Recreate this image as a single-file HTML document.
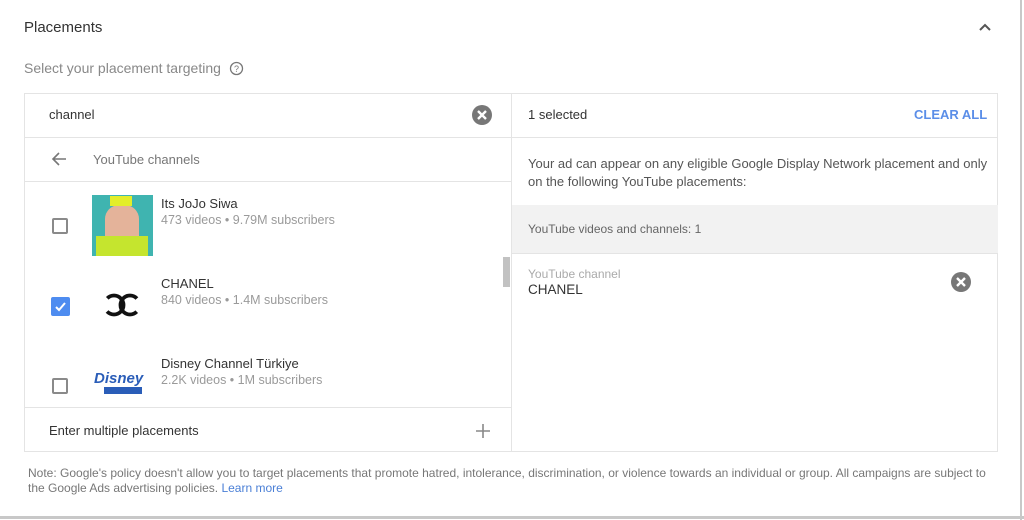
<!DOCTYPE html>
<html><head><style>
body{margin:0;width:1024px;height:520px;background:#fff;font-family:"Liberation Sans",Arial,sans-serif;position:relative;overflow:hidden;color:#333}
.a{position:absolute;white-space:nowrap}
.box{position:absolute;left:24px;top:93px;width:974px;height:359px;border:1px solid #e4e4e4;box-sizing:border-box}
.hl{position:absolute;height:1px;background:#e4e4e4}
.cb{position:absolute;width:16px;height:16px;border:2px solid #8a8a8a;border-radius:2px;box-sizing:border-box}
.t{font-size:13px;color:#333}
.s{font-size:12.5px;color:#9a9a9a}
</style></head><body>
<div style="position:absolute;right:2px;top:0;width:2px;height:520px;background:#c8c8c8"></div>
<div style="position:absolute;left:0;bottom:1px;width:1024px;height:3px;background:#c8c8c8"></div>
<div class="a" style="left:24px;top:19px;font-size:15px;color:#333">Placements</div>
<svg class="a" style="left:978px;top:22px" width="14" height="10"><path d="M2 8 L7 3 L12 8" stroke="#555" stroke-width="2" fill="none"/></svg>
<div class="a" style="left:24px;top:60px;font-size:14px;color:#888">Select your placement targeting</div>
<svg class="a" style="left:229px;top:61px" width="15" height="15"><circle cx="7.5" cy="7.5" r="6" stroke="#777" stroke-width="1.3" fill="none"/><text x="7.5" y="11" font-size="9" text-anchor="middle" fill="#777" font-family="Liberation Sans">?</text></svg>
<div class="box"></div>
<div style="position:absolute;left:511px;top:93px;width:1px;height:359px;background:#e4e4e4"></div>
<div class="hl" style="left:24px;top:137px;width:974px"></div>
<div class="hl" style="left:24px;top:181px;width:487px"></div>
<div class="hl" style="left:24px;top:407px;width:487px"></div>
<div class="hl" style="left:512px;top:205px;width:486px"></div>
<div style="position:absolute;left:512px;top:205px;width:486px;height:48px;background:#f2f2f2;border-bottom:1px solid #e4e4e4"></div>
<div class="a t" style="left:49px;top:107px">channel</div>
<svg class="a" style="left:472px;top:105px" width="20" height="20"><circle cx="10" cy="10" r="10" fill="#777"/><path d="M6 6L14 14M14 6L6 14" stroke="#fff" stroke-width="2.4"/></svg>
<svg class="a" style="left:50px;top:151px" width="18" height="16"><path d="M16 8H3M9 2L3 8L9 14" stroke="#777" stroke-width="1.6" fill="none"/></svg>
<div class="a" style="left:93px;top:152px;font-size:13px;color:#777">YouTube channels</div>
<div style="position:absolute;left:92px;top:195px;width:61px;height:61px;background:#3fb4b0"></div>
<div style="position:absolute;left:105px;top:205px;width:34px;height:51px;background:#e4b39a;border-radius:14px 14px 0 0"></div>
<div style="position:absolute;left:96px;top:236px;width:52px;height:20px;background:#c5e52e"></div>
<div style="position:absolute;left:110px;top:196px;width:22px;height:10px;background:#e3ee2a"></div>
<div class="cb" style="left:52px;top:218px"></div>
<div class="a t" style="left:161px;top:196px">Its JoJo Siwa</div>
<div class="a s" style="left:161px;top:213px">473 videos • 9.79M subscribers</div>
<div style="position:absolute;left:51px;top:297px;width:19px;height:19px;background:#4e8cf0;border-radius:2px"></div>
<svg class="a" style="left:51px;top:297px" width="19" height="19"><path d="M5 10L8 13L14 6" stroke="#fff" stroke-width="2" fill="none"/></svg>
<svg class="a" style="left:101px;top:289px" width="42" height="32"><circle cx="13" cy="16" r="9.5" stroke="#111" stroke-width="3.8" fill="none" stroke-dasharray="44.8 14.9" transform="rotate(225 13 16)"/><circle cx="29" cy="16" r="9.5" stroke="#111" stroke-width="3.8" fill="none" stroke-dasharray="44.8 14.9" transform="rotate(45 29 16)"/></svg>
<div class="a t" style="left:161px;top:276px">CHANEL</div>
<div class="a s" style="left:161px;top:293px">840 videos • 1.4M subscribers</div>
<div class="cb" style="left:52px;top:378px"></div>
<div class="a" style="left:94px;top:370px;font-size:15px;font-style:italic;font-weight:bold;color:#2a5db8">Disney</div>
<div style="position:absolute;left:104px;top:387px;width:38px;height:7px;background:#2a5db8"></div>
<div class="a t" style="left:161px;top:356px">Disney Channel Türkiye</div>
<div class="a s" style="left:161px;top:373px">2.2K videos • 1M subscribers</div>
<div style="position:absolute;left:503px;top:257px;width:7px;height:30px;background:#c2c2c2"></div>
<div class="a t" style="left:49px;top:423px">Enter multiple placements</div>
<svg class="a" style="left:475px;top:423px" width="16" height="16"><path d="M8 1V15M1 8H15" stroke="#888" stroke-width="1.6"/></svg>
<div class="a t" style="left:528px;top:107px">1 selected</div>
<div class="a" style="left:914px;top:107px;font-size:13px;font-weight:bold;color:#5b8ee8">CLEAR ALL</div>
<div class="a t" style="left:528px;top:155px;color:#555;line-height:18px;white-space:normal;width:462px">Your ad can appear on any eligible Google Display Network placement and only on the following YouTube placements:</div>
<div class="a" style="left:528px;top:222px;font-size:12px;color:#666">YouTube videos and channels: 1</div>
<div class="a" style="left:528px;top:267px;font-size:12px;color:#aaa">YouTube channel</div>
<div class="a" style="left:528px;top:282px;font-size:13.5px;color:#333">CHANEL</div>
<svg class="a" style="left:951px;top:272px" width="20" height="20"><circle cx="10" cy="10" r="10" fill="#777"/><path d="M6 6L14 14M14 6L6 14" stroke="#fff" stroke-width="2.4"/></svg>
<div class="a" style="left:28px;top:466px;font-size:12px;color:#777;line-height:15px;white-space:normal;width:975px">Note: Google's policy doesn't allow you to target placements that promote hatred, intolerance, discrimination, or violence towards an individual or group. All campaigns are subject to the Google Ads advertising policies. <span style="color:#4a7fd6">Learn more</span></div>
</body></html>
